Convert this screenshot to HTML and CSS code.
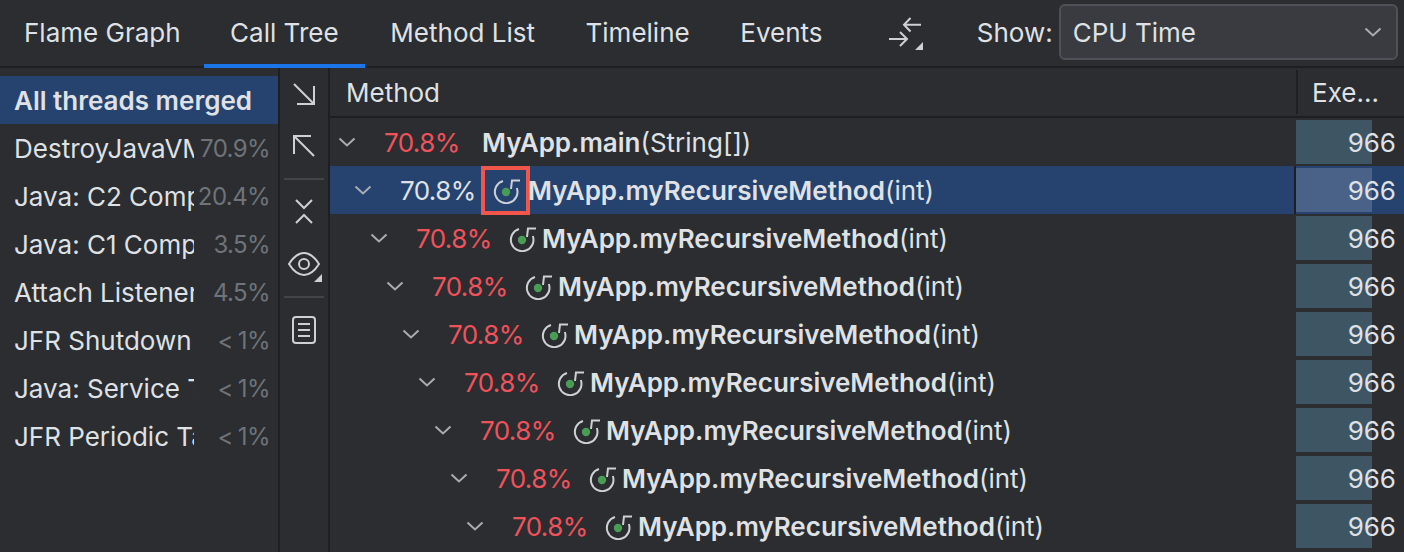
FILE: index.html
```html
<!DOCTYPE html>
<html lang="en">
<head>
<meta charset="utf-8">
<title>Profiler</title>
<link rel="stylesheet" href="styles.css">
</head>
<body>
<svg class="defs" aria-hidden="true">
  <symbol id="chev" viewBox="0 0 18 10"><path d="M1.5 1.5 L9 8.5 L16.5 1.5" fill="none" stroke="#a8adb5" stroke-width="2"/></symbol>
  <symbol id="rec" viewBox="0 0 28 28">
    <path d="M11 5 A11.300 11.300 0 1 0 24.800 12" fill="none" stroke="#ced0d6" stroke-width="2"/>
    <path d="M28 4.500 H20 L19 13" fill="none" stroke="#ced0d6" stroke-width="2"/>
    <circle cx="14" cy="16" r="4.200" fill="#499c54"/>
  </symbol>
</svg>
<div class="app">
  <header class="topbar">
    <nav class="tabs">
      <span class="tab first-tab"><span class="tab-text">Flame Graph</span></span>
      <span class="tab active"><span class="tab-text">Call Tree</span></span>
      <span class="tab"><span class="tab-text">Method List</span></span>
      <span class="tab"><span class="tab-text">Timeline</span></span>
      <span class="tab"><span class="tab-text">Events</span></span>
    </nav>
    <svg class="swap" width="36" height="34" viewBox="0 0 36 34">
      <path d="M33 8.700 H16 M22.500 2 L16 8.700 L22.500 15.500" fill="none" stroke="#ced0d6" stroke-width="2"/>
      <path d="M1 23 H19 M12 16 L19 23 L12 30" fill="none" stroke="#ced0d6" stroke-width="2"/>
      <path d="M35 26 V34 H27 Z" fill="#ced0d6"/>
    </svg>
    <label class="show-label">Show:</label>
    <div class="combo"><span>CPU Time</span>
      <svg class="combo-chev" width="18" height="10"><use href="#chev"/></svg>
    </div>
  </header>
  <main class="body">
    <aside class="threads">
      <div class="thread selected"><span class="tname">All threads merged</span></div>
      <div class="thread"><span class="tname">DestroyJavaVM</span><span class="tpct">70.9%</span></div>
      <div class="thread"><span class="tname">Java: C2 CompilerThread</span><span class="tpct">20.4%</span></div>
      <div class="thread"><span class="tname">Java: C1 CompilerThread</span><span class="tpct">3.5%</span></div>
      <div class="thread"><span class="tname">Attach Listener</span><span class="tpct">4.5%</span></div>
      <div class="thread"><span class="tname">JFR Shutdown Hook</span><span class="tpct">&lt; 1%</span></div>
      <div class="thread"><span class="tname">Java: Service Thread</span><span class="tpct">&lt; 1%</span></div>
      <div class="thread"><span class="tname">JFR Periodic Tasks</span><span class="tpct">&lt; 1%</span></div>
    </aside>
    <div class="tools">
      <svg class="tool t1" width="24" height="24" viewBox="0 0 24 24"><path d="M2 2 L21 21 M22 4 V22 H5" fill="none" stroke="#ced0d6" stroke-width="2"/></svg>
      <svg class="tool t2" width="24" height="24" viewBox="0 0 24 24"><path d="M22 22 L3 3 M2 20 V2 H19" fill="none" stroke="#ced0d6" stroke-width="2"/></svg>
      <div class="tool-sep s1"></div>
      <svg class="tool t3" width="18" height="26" viewBox="0 0 18 26"><path d="M1 2 L9 10 L17 2 M1 25 L9 17 L17 25" fill="none" stroke="#ced0d6" stroke-width="2"/></svg>
      <svg class="tool t4" width="36" height="31" viewBox="0 0 36 31"><path d="M3 12 C8 4 13 1 18 1 C23 1 28 4 33 12 C28 20 23 23 18 23 C13 23 8 20 3 12 Z" fill="none" stroke="#ced0d6" stroke-width="2"/><circle cx="18" cy="12" r="5" fill="none" stroke="#ced0d6" stroke-width="2"/><path d="M36 22 V30 H28 Z" fill="#ced0d6"/></svg>
      <div class="tool-sep s2"></div>
      <svg class="tool t5" width="24" height="28" viewBox="0 0 24 28"><rect x="1" y="1" width="22" height="26" rx="3" fill="none" stroke="#ced0d6" stroke-width="2"/><path d="M6 8 H18 M6 14 H18 M6 20 H18" stroke="#ced0d6" stroke-width="2"/></svg>
    </div>
    <section class="tree">
      <div class="thead"><span class="th-method">Method</span><span class="th-exe">Exe...</span></div>
      <div class="rows">
        <div class="row">
          <div class="cell" style="padding-left:8px"><svg class="chev" width="18" height="10"><use href="#chev"/></svg><span class="pct">70.8%</span><span class="name first"><b>MyApp.main</b>(String[])</span></div>
          <div class="exe"><i class="bar"></i><span>966</span></div>
        </div>
        <div class="row sel">
          <div class="cell" style="padding-left:24px"><svg class="chev" width="18" height="10"><use href="#chev"/></svg><span class="pct">70.8%</span><span class="hl"><svg width="28" height="28"><use href="#rec"/></svg></span><span class="name"><b>MyApp.myRecursiveMethod</b>(int)</span></div>
          <div class="exe"><i class="bar"></i><span>966</span></div>
        </div>
        <div class="row">
          <div class="cell" style="padding-left:40px"><svg class="chev" width="18" height="10"><use href="#chev"/></svg><span class="pct">70.8%</span><svg class="rec" width="28" height="28"><use href="#rec"/></svg><span class="name"><b>MyApp.myRecursiveMethod</b>(int)</span></div>
          <div class="exe"><i class="bar"></i><span>966</span></div>
        </div>
        <div class="row">
          <div class="cell" style="padding-left:56px"><svg class="chev" width="18" height="10"><use href="#chev"/></svg><span class="pct">70.8%</span><svg class="rec" width="28" height="28"><use href="#rec"/></svg><span class="name"><b>MyApp.myRecursiveMethod</b>(int)</span></div>
          <div class="exe"><i class="bar"></i><span>966</span></div>
        </div>
        <div class="row">
          <div class="cell" style="padding-left:72px"><svg class="chev" width="18" height="10"><use href="#chev"/></svg><span class="pct">70.8%</span><svg class="rec" width="28" height="28"><use href="#rec"/></svg><span class="name"><b>MyApp.myRecursiveMethod</b>(int)</span></div>
          <div class="exe"><i class="bar"></i><span>966</span></div>
        </div>
        <div class="row">
          <div class="cell" style="padding-left:88px"><svg class="chev" width="18" height="10"><use href="#chev"/></svg><span class="pct">70.8%</span><svg class="rec" width="28" height="28"><use href="#rec"/></svg><span class="name"><b>MyApp.myRecursiveMethod</b>(int)</span></div>
          <div class="exe"><i class="bar"></i><span>966</span></div>
        </div>
        <div class="row">
          <div class="cell" style="padding-left:104px"><svg class="chev" width="18" height="10"><use href="#chev"/></svg><span class="pct">70.8%</span><svg class="rec" width="28" height="28"><use href="#rec"/></svg><span class="name"><b>MyApp.myRecursiveMethod</b>(int)</span></div>
          <div class="exe"><i class="bar"></i><span>966</span></div>
        </div>
        <div class="row">
          <div class="cell" style="padding-left:120px"><svg class="chev" width="18" height="10"><use href="#chev"/></svg><span class="pct">70.8%</span><svg class="rec" width="28" height="28"><use href="#rec"/></svg><span class="name"><b>MyApp.myRecursiveMethod</b>(int)</span></div>
          <div class="exe"><i class="bar"></i><span>966</span></div>
        </div>
        <div class="row">
          <div class="cell" style="padding-left:136px"><svg class="chev" width="18" height="10"><use href="#chev"/></svg><span class="pct">70.8%</span><svg class="rec" width="28" height="28"><use href="#rec"/></svg><span class="name"><b>MyApp.myRecursiveMethod</b>(int)</span></div>
          <div class="exe"><i class="bar"></i><span>966</span></div>
        </div>
      </div>
    </section>
  </main>
</div>
</body>
</html>
```
FILE: styles.css
```css
* { box-sizing: border-box; }
html, body { margin: 0; padding: 0; }
body {
  width: 1404px;
  height: 552px;
  overflow: hidden;
  background: #2b2d30;
  color: #dfe1e5;
  font-family: Inter, "Liberation Sans", sans-serif;
  font-size: 26px;
}
.defs { display: none; }
.app { display: flex; flex-direction: column; height: 552px; }

.topbar {
  flex: none;
  height: 68px;
  display: flex;
  align-items: center;
  border-bottom: 2px solid #1e1f22;
}
.tabs { display: flex; height: 66px; }
.tab {
  display: flex;
  align-items: center;
  padding: 0 25.300px 2px;
  position: relative;
}
.first-tab { padding-left: 24px; padding-right: 23px; }
.tab.active { padding-left: 26.500px; padding-right: 26.500px; }
.tab.active::after {
  content: "";
  position: absolute;
  left: 0; right: 0; bottom: -2px;
  height: 4px;
  background: #1a75e8;
}
.swap { margin-left: 40px; flex: none; }
.show-label { margin-left: 53px; padding-bottom: 2px; }
.combo {
  margin-left: 6px;
  width: 339px;
  height: 56px;
  margin-top: -2px;
  display: flex;
  align-items: center;
  justify-content: space-between;
  padding: 0 14px 0 12px;
  background: #393b40;
  border: 2px solid #4e5157;
  border-radius: 6px;
}

.body { flex: 1; display: flex; min-height: 0; }

.threads {
  flex: none;
  width: 280px;
  padding-top: 8px;
  border-right: 2px solid #1e1f22;
}
.thread {
  height: 48px;
  display: flex;
  align-items: center;
  padding: 0 8px 0 14px;
}
.thread.selected { background: #26426f; font-weight: 600; padding-top: 1px; }
.tname { width: 180px; flex: none; overflow: hidden; white-space: nowrap; }
.selected .tname { width: auto; }
.tpct { flex: 1; text-align: right; color: #6f737a; font-size: 24px; letter-spacing: -0.6px; word-spacing: -1px; }

.tools {
  flex: none;
  width: 50px;
  display: flex;
  flex-direction: column;
  align-items: center;
  border-right: 2px solid #1e1f22;
}
.tool { display: block; flex: none; }
.t1 { margin-top: 14px; }
.t2 { margin-top: 28px; }
.t3 { margin-top: 18px; }
.t4 { margin-top: 28px; }
.t5 { margin-top: 18px; }
.tool-sep { width: 40px; height: 2px; background: #43454a; flex: none; }
.s1 { margin-top: 20px; }
.s2 { margin-top: 13px; }

.tree { flex: 1; min-width: 0; display: flex; flex-direction: column; }
.thead {
  flex: none;
  height: 50px;
  display: flex;
  align-items: center;
  justify-content: space-between;
  border-bottom: 2px solid #1e1f22;
}
.th-method { padding-left: 16px; padding-top: 1px; }
.th-exe {
  width: 108px;
  height: 44px;
  display: flex;
  align-items: center;
  padding-left: 14px;
  border-left: 2px solid #1e1f22;
}
.rows { flex: 1; min-height: 0; overflow: hidden; }
.row { height: 48px; display: flex; }
.cell { flex: 1; min-width: 0; display: flex; align-items: center; white-space: nowrap; }
.row.sel .cell { background: #26426f; }
.row.sel { background: #26426f; }
.row.sel .exe { border-left: 2px solid #1e1f22; margin-left: -2px; width: 110px; }
.chev { flex: none; }
.pct { margin-left: 28px; color: #f0525c; flex: none; width: 74px; letter-spacing: -0.6px; }
.row.sel .pct { color: #dfe1e5; }
.first { margin-left: 24px; }
.rec { flex: none; margin-left: 18px; margin-right: 6px; }
.hl {
  flex: none;
  width: 49px;
  height: 49px;
  margin-left: 7px;
  margin-right: -2px;
  border: 4px solid #f2564b;
  display: flex;
  align-items: center;
  justify-content: center;
}
b { font-weight: 600; }
.exe {
  flex: none;
  width: 108px;
  position: relative;
  display: flex;
  align-items: center;
  justify-content: flex-end;
  padding-right: 8px;
}
.exe span { position: relative; }
.bar {
  position: absolute;
  left: 0; top: 2px; bottom: 2px;
  width: 76px;
  background: #3e5564;
}
.row.sel .bar { background: #4a6288; }
```
